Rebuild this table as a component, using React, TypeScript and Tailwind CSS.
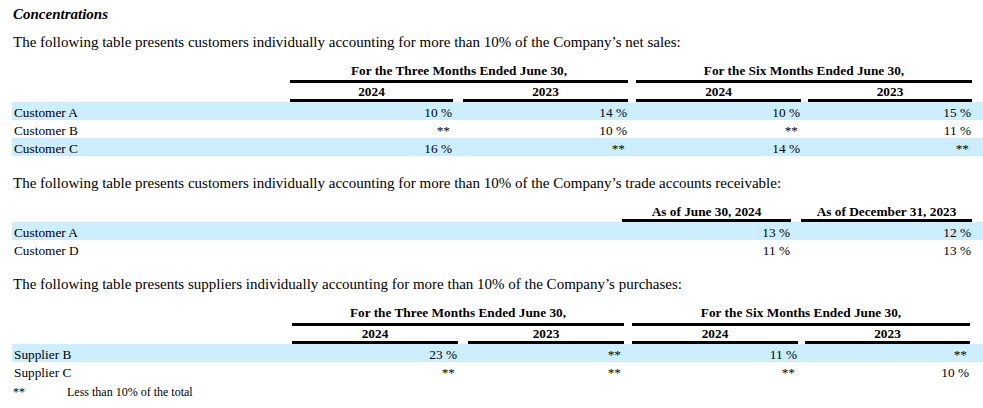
import React from 'react';

/* ─── Data ──────────────────────────────────────────────────────────────── */

type Row = { label: string; values: string[] };

const salesRows: Row[] = [
  { label: 'Customer A', values: ['10 %', '14 %', '10 %', '15 %'] },
  { label: 'Customer B', values: ['**', '10 %', '**', '11 %'] },
  { label: 'Customer C', values: ['16 %', '**', '14 %', '**'] },
];

const receivableRows: Row[] = [
  { label: 'Customer A', values: ['13 %', '12 %'] },
  { label: 'Customer D', values: ['11 %', '13 %'] },
];

const purchaseRows: Row[] = [
  { label: 'Supplier B', values: ['23 %', '**', '11 %', '**'] },
  { label: 'Supplier C', values: ['**', '**', '**', '10 %'] },
];

/* ─── Cells ─────────────────────────────────────────────────────────────── */

function Value({ v }: { v: string }) {
  return <div className={v === '**' ? 'text-right pr-[3px]' : 'text-right pr-[1px]'}>{v}</div>;
}

function BodyRow({ grid, row, shaded }: { grid: string; row: Row; shaded: boolean }) {
  return (
    <div className={`${grid} h-[18px] leading-[18px] pt-[1.5px] ${shaded ? 'bg-[#cceeff]' : ''}`}>
      <div className="pl-[2px]">{row.label}</div>
      {row.values.map((v, i) => (
        <React.Fragment key={i}>
          {i > 0 && <div />}
          <Value v={v} />
        </React.Fragment>
      ))}
    </div>
  );
}

/* ─── Period table (three / six months) ─────────────────────────────────── */

function PeriodTable({
  grid, rows, groupPad, yearPad,
}: {
  grid: string;
  rows: Row[];
  groupPad: string;
  yearPad: string;
}) {
  const group = `col-span-3 text-center font-bold leading-[14px] border-b-[3px] border-black ${groupPad}`;
  const year = `text-center font-bold leading-[14px] border-b-[3px] border-black ${yearPad}`;
  return (
    <div className="mt-[13px] text-[13.3px]">
      <div className={grid}>
        <div />
        <div className={group}>For the Three Months Ended June 30,</div>
        <div />
        <div className={group}>For the Six Months Ended June 30,</div>
      </div>
      <div className={grid}>
        <div />
        <div className={year}>2024</div>
        <div />
        <div className={year}>2023</div>
        <div />
        <div className={year}>2024</div>
        <div />
        <div className={year}>2023</div>
      </div>
      {rows.map((r, i) => (
        <BodyRow key={r.label} grid={grid} row={r} shaded={i % 2 === 0} />
      ))}
    </div>
  );
}

/* ─── Page ──────────────────────────────────────────────────────────────── */

export default function App() {
  const grid1 = 'grid grid-cols-[278px_163px_10px_165px_8px_165px_7px_164px]';
  const grid2 = 'grid grid-cols-[610px_169px_10px_171px]';
  const grid3 = 'grid grid-cols-[280px_166px_10px_156px_8px_166px_7px_165px]';

  return (
    <div className="w-[983px] h-[408px] overflow-hidden bg-white pl-[12px] text-black font-['Liberation_Serif',serif]">
      <h2 className="mt-[6px] pl-[1px] text-[15px] leading-[17px] font-bold italic">Concentrations</h2>

      <p className="mt-[11px] pl-[1px] text-[15px] leading-[17px]">
        The following table presents customers individually accounting for more than 10% of the Company’s net sales:
      </p>

      <PeriodTable grid={grid1} rows={salesRows} groupPad="pb-[2px]" yearPad="pt-[2px]" />

      <p className="mt-[19px] pl-[1px] text-[15px] leading-[17px]">
        The following table presents customers individually accounting for more than 10% of the Company’s trade accounts receivable:
      </p>

      <div className="mt-[13px] text-[13.3px]">
        <div className={grid2}>
          <div />
          <div className="text-center font-bold leading-[14px] border-b-[3px] border-black">As of June 30, 2024</div>
          <div />
          <div className="text-center font-bold leading-[14px] border-b-[3px] border-black">As of December 31, 2023</div>
        </div>
        {receivableRows.map((r, i) => (
          <BodyRow key={r.label} grid={grid2} row={r} shaded={i % 2 === 0} />
        ))}
      </div>

      <p className="mt-[18px] pl-[1px] text-[15px] leading-[17px]">
        The following table presents suppliers individually accounting for more than 10% of the Company’s purchases:
      </p>

      <PeriodTable grid={grid3} rows={purchaseRows} groupPad="pb-[3px]" yearPad="pt-[1px]" />

      <div className="mt-[5px] flex pl-[1px] text-[12px] leading-[14px]">
        <span className="w-[54px]">**</span>
        <span>Less than 10% of the total</span>
      </div>
    </div>
  );
}
